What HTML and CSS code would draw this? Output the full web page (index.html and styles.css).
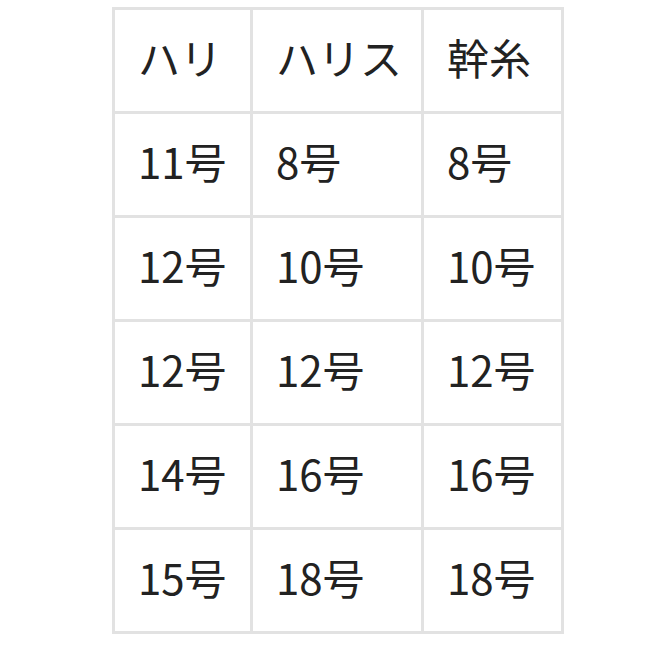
FILE: index.html
```html
<!DOCTYPE html>
<html lang="ja">
<head>
<meta charset="utf-8">
<link rel="stylesheet" href="styles.css">
</head>
<body>
<table class="spec">
  <colgroup>
    <col class="c1"><col class="c2"><col class="c3">
  </colgroup>
  <tr><td>ハリ</td><td>ハリス</td><td>幹糸</td></tr>
  <tr><td>11号</td><td>8号</td><td>8号</td></tr>
  <tr><td>12号</td><td>10号</td><td>10号</td></tr>
  <tr><td>12号</td><td>12号</td><td>12号</td></tr>
  <tr><td>14号</td><td>16号</td><td>16号</td></tr>
  <tr><td>15号</td><td>18号</td><td>18号</td></tr>
</table>
</body>
</html>
```
FILE: styles.css
```css
html, body {
  margin: 0;
  padding: 0;
  background: #ffffff;
}
body {
  padding: 7px 0 0 112px;
  font-family: "Noto Sans CJK JP", "Noto Sans", sans-serif;
  color: #222222;
}
.spec {
  border-collapse: collapse;
  table-layout: fixed;
  width: 452px;
}
.c1 { width: 138px; }
.c2 { width: 171px; }
.c3 { width: 140px; }
.spec td {
  border: 3px solid #e2e2e2;
  height: 93px;
  padding: 0 0 8px 23px;
  font-size: 42px;
  line-height: 1;
  vertical-align: middle;
  white-space: nowrap;
}
```
